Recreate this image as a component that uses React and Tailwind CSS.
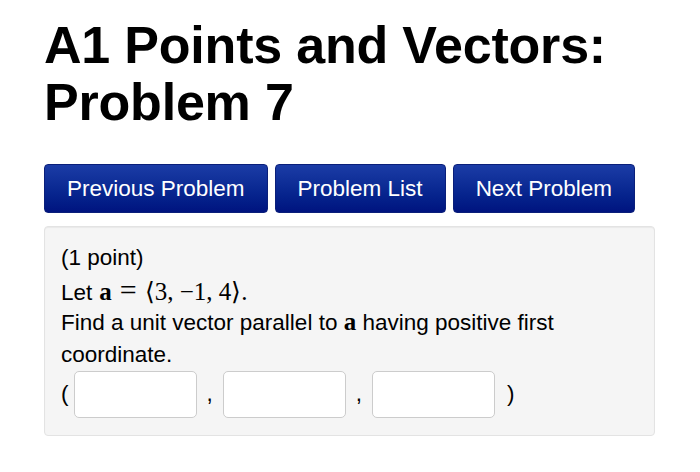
export default function App() {
  const sans = { fontFamily: '"Liberation Sans", Arial, sans-serif' };
  const buttons = ["Previous Problem", "Problem List", "Next Problem"];

  return (
    <div className="w-[700px] h-[472px] bg-white text-black px-[44px] pt-[17px]" style={sans}>
      <h1 className="text-[52px] leading-[57px] font-bold tracking-[-0.2px]">
        A1 Points and Vectors:
        <br />
        Problem 7
      </h1>

      <div className="flex gap-[7px] mt-[33px]">
        {buttons.map((b) => (
          <button
            key={b}
            className="h-[49px] px-[22px] rounded-[4px] border border-[#0a1f7a] bg-gradient-to-b from-[#1b3ca6] to-[#00137f] text-white text-[22.5px]"
          >
            {b}
          </button>
        ))}
      </div>

      <div className="mt-[13px] w-[611px] h-[210px] bg-[#f5f5f5] border border-[#e3e3e3] rounded-[4px] shadow-[inset_0_1px_1px_rgba(0,0,0,0.05)] px-[16px] pt-[15px] text-[22.5px] leading-[32.5px]">
        <div>(1 point)</div>
        <div className="flex items-baseline h-[32px]">
          <span>Let</span>
          <span className="font-['Liberation_Serif',serif] text-[25px] ml-[7px]">
            <b>a</b>
            <span className="mx-[8px] text-[30px] leading-none">=</span>
            <span>⟨3, −1, 4⟩.</span>
          </span>
        </div>
        <div>
          Find a unit vector parallel to{" "}
          <b className="font-['Liberation_Serif',serif] text-[25px] leading-none">a</b> having positive first
          coordinate.
        </div>
        <div className="flex items-center -mt-[1px]">
          <span>(</span>
          <input className="ml-[5px] w-[123px] h-[47px] bg-white border border-[#cccccc] rounded-[5px]" />
          <span className="mx-[10px]">,</span>
          <input className="w-[123px] h-[47px] bg-white border border-[#cccccc] rounded-[5px]" />
          <span className="mx-[10px]">,</span>
          <input className="w-[123px] h-[47px] bg-white border border-[#cccccc] rounded-[5px]" />
          <span className="ml-[12px]">)</span>
        </div>
      </div>
    </div>
  );
}
